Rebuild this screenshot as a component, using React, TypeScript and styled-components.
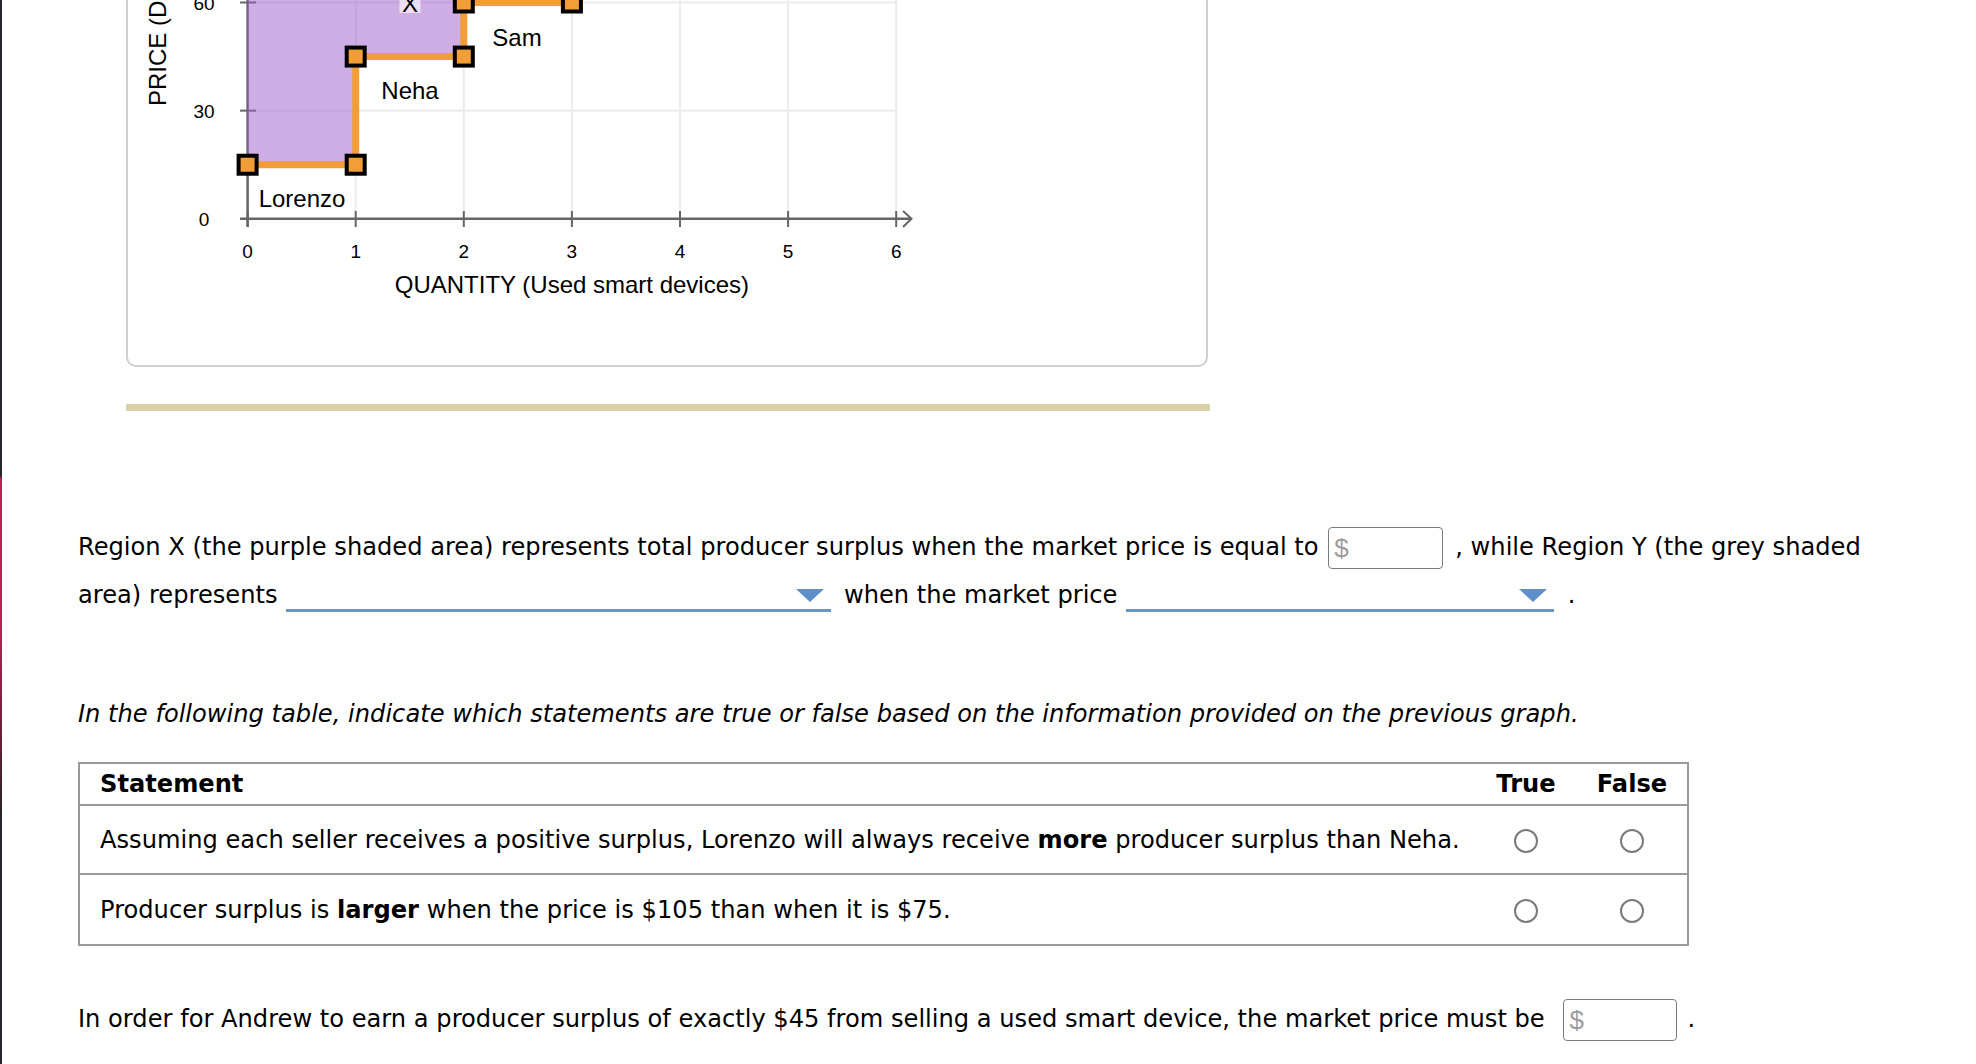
import React from "react";
import styled, { createGlobalStyle } from "styled-components";

const Global = createGlobalStyle`
  html, body { margin: 0; padding: 0; background: #ffffff; overflow: hidden; }
  body { font-family: Verdana, "DejaVu Sans", sans-serif; color: #000; }
`;

const Page = styled.div`
  display: flex;
  height: 1064px;
  overflow: hidden;
`;

const Rail = styled.div`
  flex: 0 0 2px;
  background: linear-gradient(
    to bottom,
    #23272d 0,
    #23272d 476px,
    #b5214f 478px,
    #b5214f 632px,
    #2b2126 812px,
    #23272d 818px,
    #23272d 100%
  );
`;

const Main = styled.main`
  flex: 1;
  padding-left: 76px;
  display: flex;
  flex-direction: column;
  align-items: flex-start;
`;

const GraphCard = styled.section`
  margin: -302px 0 0 48px;
  width: 1078px;
  border: 2px solid #cfcfcf;
  border-radius: 10px;
  padding-bottom: 25px;
  background: #fff;
`;

const ChartSvg = styled.svg`
  display: block;
  font-family: "Liberation Sans", Arial, sans-serif;
`;

const Divider = styled.div`
  margin: 37px 0 0 48px;
  width: 1084px;
  height: 7px;
  background: #d9cfa9;
`;

const Para = styled.p<{ $top: number; $italic?: boolean }>`
  margin: ${(p) => p.$top}px 0 0 0;
  width: 1820px;
  font-size: 24.15px;
  line-height: 48px;
  font-style: ${(p) => (p.$italic ? "italic" : "normal")};
`;

const Money = styled.span<{ $w: number; $ml: number; $mr: number }>`
  display: inline-flex;
  align-items: center;
  box-sizing: border-box;
  width: ${(p) => p.$w}px;
  height: 42px;
  margin: 0 ${(p) => p.$mr}px 0 ${(p) => p.$ml}px;
  padding-left: 5px;
  border: 1.5px solid #7b7b7b;
  border-radius: 4px;
  vertical-align: middle;
  font-family: "Liberation Sans", Arial, sans-serif;
  font-size: 26px;
  line-height: 1;
  color: #9c9c9c;
`;

const Select = styled.span<{ $w: number }>`
  display: inline-flex;
  justify-content: flex-end;
  align-items: flex-end;
  box-sizing: border-box;
  width: ${(p) => p.$w}px;
  height: 31px;
  margin: 0 5px 0 1px;
  padding: 0 7px 7px 0;
  border-bottom: 3px solid #6b96c8;
  vertical-align: middle;
`;

const Caret = styled.span`
  width: 0;
  height: 0;
  border-left: 14.5px solid transparent;
  border-right: 14.5px solid transparent;
  border-top: 13px solid #5f8fc8;
`;

const Period = styled.span`
  margin-left: 1px;
`;

const Table = styled.table`
  margin-top: 24px;
  width: 1611px;
  border-collapse: collapse;
  border: 2px solid #9a9a9a;
  font-size: 24.15px;
`;

const HeadCell = styled.th<{ $align: "left" | "center"; $w?: number }>`
  height: 40px;
  padding: 0 ${(p) => (p.$align === "left" ? "10px 0 20px" : "0")};
  text-align: ${(p) => p.$align};
  font-weight: bold;
  white-space: nowrap;
  width: ${(p) => (p.$w ? `${p.$w}px` : "auto")};
  border-bottom: 2px solid #9a9a9a;
`;

const Row = styled.tr`
  border-top: 2px solid #9a9a9a;
`;

const Cell = styled.td<{ $center?: boolean; $h: number }>`
  height: ${(p) => p.$h}px;
  padding: 0 ${(p) => (p.$center ? "0" : "10px 0 20px")};
  text-align: ${(p) => (p.$center ? "center" : "left")};
  white-space: nowrap;
  vertical-align: middle;
`;

const Radio = styled.span`
  display: inline-block;
  box-sizing: border-box;
  width: 24px;
  height: 24px;
  border-radius: 50%;
  border: 2px solid #7a7a7a;
  background: #fff;
  vertical-align: middle;
`;

const X0 = 247.6;
const UX = 108.1;
const Y0 = 218.8;
const UY = 3.605;
const px = (q: number) => X0 + UX * q;
const py = (p: number) => Y0 - UY * p;

const Chart: React.FC = () => {
  const squares: [number, number][] = [
    [0, 15],
    [1, 15],
    [1, 45],
    [2, 45],
    [2, 60],
    [3, 60],
  ];
  const stepPath = `M ${px(0)} ${py(15)} H ${px(1)} V ${py(45)} H ${px(2)} V ${py(60)} H ${px(3)} V ${py(95)} H ${px(4)}`;
  const purple = [
    [0, 15],
    [1, 15],
    [1, 45],
    [2, 45],
    [2, 75],
    [0, 75],
  ]
    .map(([q, p]) => `${px(q)},${py(p)}`)
    .join(" ");
  return (
    <ChartSvg width={1078} height={640} viewBox="128 -300 1078 640">
      {[1, 2, 3, 4, 5, 6].map((q) => (
        <line key={`v${q}`} x1={px(q)} x2={px(q)} y1={Y0} y2={py(140)} stroke="#ebebeb" strokeWidth={2} />
      ))}
      {[30, 60, 90, 120].map((p) => (
        <line key={`h${p}`} x1={px(0)} x2={px(6)} y1={py(p)} y2={py(p)} stroke="#ebebeb" strokeWidth={2} />
      ))}
      <line x1={240} x2={911} y1={Y0} y2={Y0} stroke="#666" strokeWidth={2.5} />
      <polyline points={`903,211 911.5,${Y0} 903,227`} fill="none" stroke="#666" strokeWidth={2} />
      {[0, 1, 2, 3, 4, 5, 6].map((q) => (
        <line key={`t${q}`} x1={px(q)} x2={px(q)} y1={211} y2={227} stroke="#666" strokeWidth={2} />
      ))}
      <line x1={px(0)} x2={px(0)} y1={227} y2={-300} stroke="#666" strokeWidth={2.5} />
      {[30, 60, 90, 120].map((p) => (
        <line key={`yt${p}`} x1={240} x2={256} y1={py(p)} y2={py(p)} stroke="#666" strokeWidth={2} />
      ))}
      <polygon points={purple} fill="rgba(159, 93, 205, 0.5)" />
      <path d={stepPath} fill="none" stroke="#f19d38" strokeWidth={7} />
      {squares.map(([q, p]) => (
        <rect
          key={`s${q}-${p}`}
          x={px(q) - 9}
          y={py(p) - 9}
          width={18}
          height={18}
          fill="#f19d38"
          stroke="#000"
          strokeWidth={4}
        />
      ))}
      {[0, 30, 60, 90].map((p) => (
        <text key={`yl${p}`} x={204} y={py(p) + 7} fontSize={19} textAnchor="middle" fill="#000">
          {p}
        </text>
      ))}
      {[0, 1, 2, 3, 4, 5, 6].map((q) => (
        <text key={`xl${q}`} x={px(q)} y={257.5} fontSize={19} textAnchor="middle" fill="#000">
          {q}
        </text>
      ))}
      <text x={px(3)} y={292.5} fontSize={24} textAnchor="middle" fill="#000">
        QUANTITY (Used smart devices)
      </text>
      <text x={166} y={106} fontSize={24} fill="#000" transform="rotate(-90 166 106)">
        PRICE (Dollars per used smart device)
      </text>
      <text x={517} y={46} fontSize={24} textAnchor="middle" fill="#000">
        Sam
      </text>
      <text x={410} y={99} fontSize={24} textAnchor="middle" fill="#000">
        Neha
      </text>
      <text x={302} y={207} fontSize={24} textAnchor="middle" fill="#000">
        Lorenzo
      </text>
      <rect x={399.5} y={-10} width={21} height={23} fill="rgba(255,255,255,0.6)" />
      <text x={410} y={11.5} fontSize={24} textAnchor="middle" fill="#000">
        X
      </text>
    </ChartSvg>
  );
};

export default function App() {
  return (
    <>
      <Global />
      <Page>
        <Rail />
        <Main>
          <GraphCard>
            <Chart />
          </GraphCard>
          <Divider />
          <Para $top={112}>
            Region X (the purple shaded area) represents total producer surplus when the market price is equal to{" "}
            <Money $w={115} $ml={2} $mr={12}>$</Money>, while Region Y (the grey shaded area) represents{" "}
            <Select $w={545}>
              <Caret />
            </Select>{" "}
            when the market price{" "}
            <Select $w={428}>
              <Caret />
            </Select>{" "}
            <Period>.</Period>
          </Para>
          <Para $top={71} $italic>
            In the following table, indicate which statements are true or false based on the information provided on
            the previous graph.
          </Para>
          <Table>
            <thead>
              <tr>
                <HeadCell $align="left">Statement</HeadCell>
                <HeadCell $align="center" $w={102}>
                  True
                </HeadCell>
                <HeadCell $align="center" $w={110}>
                  False
                </HeadCell>
              </tr>
            </thead>
            <tbody>
              <Row>
                <Cell $h={67}>
                  Assuming each seller receives a positive surplus, Lorenzo will always receive <b>more</b> producer
                  surplus than Neha.
                </Cell>
                <Cell $center $h={67}>
                  <Radio />
                </Cell>
                <Cell $center $h={67}>
                  <Radio />
                </Cell>
              </Row>
              <Row>
                <Cell $h={69}>
                  Producer surplus is <b>larger</b> when the price is $105 than when it is $75.
                </Cell>
                <Cell $center $h={69}>
                  <Radio />
                </Cell>
                <Cell $center $h={69}>
                  <Radio />
                </Cell>
              </Row>
            </tbody>
          </Table>
          <Para $top={49}>
            In order for Andrew to earn a producer surplus of exactly $45 from selling a used smart device, the market
            price must be <Money $w={114} $ml={11} $mr={10}>$</Money>.
          </Para>
        </Main>
      </Page>
    </>
  );
}
